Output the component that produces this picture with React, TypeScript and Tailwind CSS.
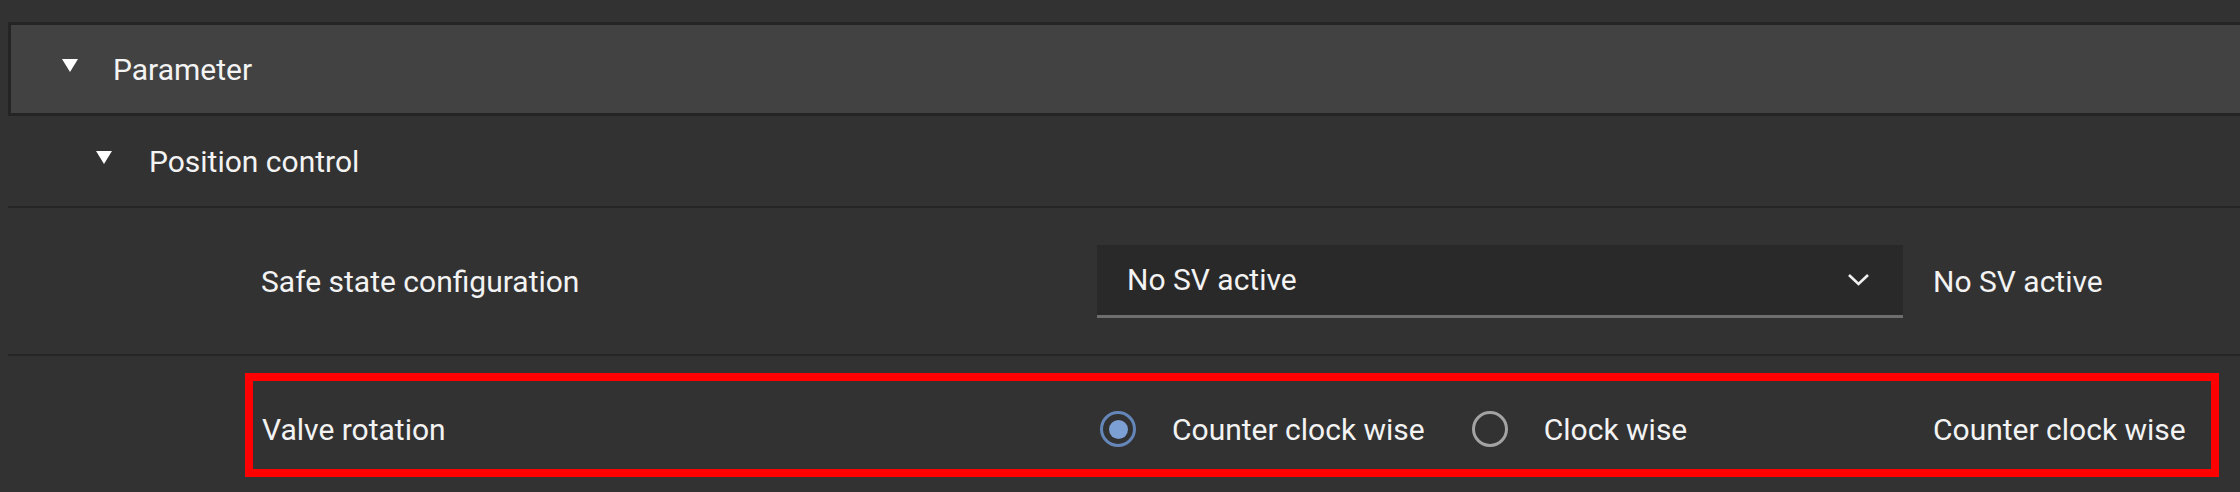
import React from "react";

const Caret = () => (
  <svg width="18" height="14" viewBox="0 0 18 14" className="mb-[8px] shrink-0">
    <path d="M1 1 H17 L9 14 Z" fill="#ffffff" />
  </svg>
);

const Chevron = () => (
  <svg width="23" height="14" viewBox="0 0 23 14">
    <path d="M2 2 L11.5 11 L21 2" fill="none" stroke="#f0f0f0" strokeWidth="2.6" />
  </svg>
);

const Radio = ({ checked, label }: { checked: boolean; label: string }) => (
  <div className="flex items-center">
    {checked ? (
      <span className="w-[36px] h-[36px] rounded-full border-[3px] border-[#6586b8] flex items-center justify-center">
        <span className="w-[19px] h-[19px] rounded-full bg-[#7c9fd4]" />
      </span>
    ) : (
      <span className="w-[36px] h-[36px] rounded-full border-[3px] border-[#a3a3a3]" />
    )}
    <span className="ml-[36px]">{label}</span>
  </div>
);

const App = () => {
  return (
    <div className="w-[2240px] h-[492px] overflow-hidden bg-[#323232] pt-[22px] font-['Roboto',sans-serif] text-[30px] text-[#f3f3f3]">
      {/* PARAMETER HEADER */}
      <div className="ml-[8px] h-[94px] flex items-center bg-[#424242] border-y-[3px] border-l-[3px] border-[#242424] pl-[50px]">
        <Caret />
        <span className="ml-[34px]">Parameter</span>
      </div>

      {/* POSITION CONTROL */}
      <div className="ml-[8px] h-[92px] flex items-center border-b-2 border-[#262626] pl-[87px]">
        <Caret />
        <span className="ml-[36px]">Position control</span>
      </div>

      {/* SAFE STATE */}
      <div className="ml-[8px] h-[148px] flex items-center border-b-2 border-[#262626] pl-[253px]">
        <span className="w-[836px]">Safe state configuration</span>
        <div className="w-[806px] h-[73px] bg-[#292929] border-b-[3px] border-[#6e6e6e] flex items-center justify-between pl-[30px] pr-[33px]">
          <span>No SV active</span>
          <Chevron />
        </div>
        <span className="ml-[30px]">No SV active</span>
      </div>

      {/* VALVE ROTATION */}
      <div className="pt-[17px] pl-[245px]">
        <div className="w-[1974px] h-[104px] border-[8px] border-[#ff0000] flex items-center pl-[9px] pt-[8px]">
          <span className="w-[838px]">Valve rotation</span>
          <div className="w-[803px] flex items-center gap-[47px]">
            <Radio checked label="Counter clock wise" />
            <Radio checked={false} label="Clock wise" />
          </div>
          <span className="ml-[30px]">Counter clock wise</span>
        </div>
      </div>
    </div>
  );
};

export default App;
